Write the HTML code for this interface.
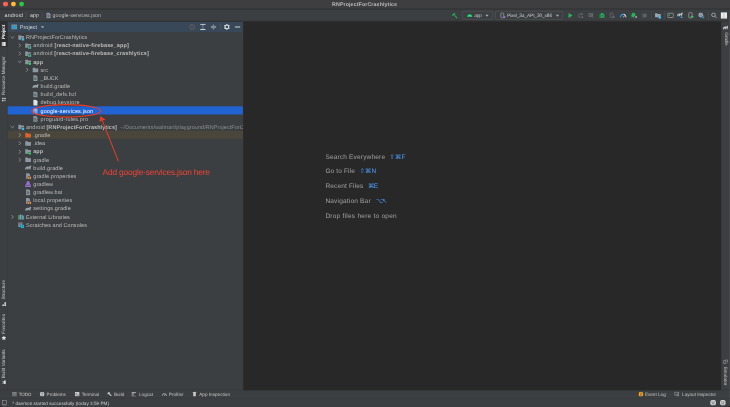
<!DOCTYPE html>
<html lang="en"><head><meta charset="utf-8"><title>RNProjectForCrashlytics</title>
<style>
html,body{margin:0;padding:0;background:#3c3f41;}
body{width:730px;height:407px;overflow:hidden;position:relative;font-family:"Liberation Sans", sans-serif;}
#stage{position:absolute;left:0;top:0;width:1792px;height:999px;transform:scale(0.407366);transform-origin:0 0;overflow:hidden;background:#3c3f41;filter:blur(0.5px);}
#stage div,#stage svg.i{position:absolute;}
#stage .t{white-space:pre;text-rendering:geometricPrecision;}
#stage .t span{position:static;}
#stage .v{transform-origin:0 0;}
</style></head><body>
<svg width="0" height="0" style="position:absolute" aria-hidden="true"><defs>
<symbol id="folder" viewBox="0 0 16 16"><path d="M1 2.5h5.6l1.4 1.8H15V13.5H1z" fill="#8c99a2"/></symbol>
<symbol id="folderEx" viewBox="0 0 16 16"><path d="M1 2.5h5.6l1.4 1.8H15V13.5H1z" fill="#d9652b"/></symbol>
<symbol id="modRoot" viewBox="0 0 16 16"><path d="M1 2.5h5.6l1.4 1.8H15V8.5H8.5V13.5H1z" fill="#8c99a2"/><rect x="9.5" y="9.5" width="6.5" height="6.5" fill="#3fb7e3"/></symbol>
<symbol id="modAndroid" viewBox="0 0 16 16"><path d="M1 2.5h5.6l1.4 1.8H15V8H7V13.5H1z" fill="#8c99a2"/><rect x="8" y="9" width="2.6" height="7" fill="#5fb865"/><rect x="10.6" y="11.5" width="2.4" height="4.5" fill="#4a9c55"/><rect x="13" y="9" width="3" height="7" fill="#3fb7e3"/></symbol>
<symbol id="modApp" viewBox="0 0 16 16"><path d="M1 2.5h5.6l1.4 1.8H15V9H9V13.5H1z" fill="#8c99a2"/><circle cx="12.3" cy="12.6" r="3" fill="#1ee36a"/></symbol>
<symbol id="file" viewBox="0 0 16 16"><path d="M3 1h6.5L13 4.5V15H3z" fill="#8c99a2"/><path d="M5 6h4M5 8.5h6M5 11h6" stroke="#3c3f41" stroke-width="1.2"/></symbol>
<symbol id="fileSel" viewBox="0 0 16 16"><path d="M3 1h6.5L13 4.5V15H3z" fill="#a9bbd6"/><path d="M5 6h4M5 8.5h6M5 11h6" stroke="#2f65ca" stroke-width="1.2"/></symbol>
<symbol id="fileWhite" viewBox="0 0 16 16"><path d="M3 1h6.5L13 4.5V15H3z" fill="#dfe3e6"/></symbol>
<symbol id="gradle" viewBox="0 0 16 16"><path d="M0.500 12.500c0-4.800 2.600-7.300 6.300-7.300 1.500 0 2.400.6 3.300.6 1.300 0 1.800-3 4-3 1.300 0 2.100 1 2.100 2.200 0 1.400-1.100 2.100-2.100 2.100.5 1.200.2 3.400-.4 5.400h-2.600v-2.400h-2.700v2.400H5.600v-2.400H3.900v2.400z" fill="#97a2aa" transform="translate(0 -0.500)"/></symbol>
<symbol id="gradleS" viewBox="0 0 16 16"><path d="M0.500 12.500c0-4.800 2.600-7.300 6.300-7.300 1.500 0 2.400.6 3.300.6 1.300 0 1.800-3 4-3 1.300 0 2.100 1 2.100 2.200 0 1.400-1.100 2.100-2.100 2.100.5 1.200.2 3.400-.4 5.400h-2.600v-2.400h-2.700v2.400H5.600v-2.400H3.900v2.400z" fill="#c6c9cb" transform="translate(0 -0.500)"/></symbol>
<symbol id="props" viewBox="0 0 16 16"><path d="M3 1h6.5L13 4.500V9H7V15H3z" fill="#8c99a2"/><rect x="8" y="11" width="2.500" height="5" fill="#e9a33a"/><rect x="10.500" y="8.500" width="2.500" height="7.500" fill="#e0533c"/><rect x="13" y="10" width="2.500" height="6" fill="#e9a33a"/></symbol>
<symbol id="shell" viewBox="0 0 16 16"><path d="M5 1h6l1 5 3 5v4H1v-4l3-5z" fill="#9b6fd0"/><path d="M2 11h12" stroke="#3c3f41" stroke-width="1.200"/></symbol>
<symbol id="libs" viewBox="0 0 16 16"><rect x="1" y="3" width="3.200" height="11" fill="#5fb865"/><rect x="5" y="1.500" width="3.200" height="12.500" fill="#8c99a2"/><rect x="9" y="3" width="3.200" height="11" fill="#3fb7e3"/><rect x="13" y="4.500" width="2.500" height="9.500" fill="#8c99a2"/></symbol>
<symbol id="scratch" viewBox="0 0 16 16"><path d="M1 1h10v6H6v5H1z" fill="#8c99a2"/><path d="M3 3.500h6M3 6h3" stroke="#3c3f41" stroke-width="1.200"/><circle cx="11" cy="11" r="4.600" fill="#20b6ef"/><path d="M11 8.500V11.300h2" stroke="#2b2b2b" stroke-width="1.200" fill="none"/></symbol>
<symbol id="chevR" viewBox="0 0 16 16"><path d="M5.500 2.500l5 5.500-5 5.500" stroke="#afb1b3" stroke-width="2" fill="none"/></symbol>
<symbol id="chevD" viewBox="0 0 16 16"><path d="M2.500 5.500l5.500 5 5.500-5" stroke="#afb1b3" stroke-width="2" fill="none"/></symbol>
<symbol id="ddArrow" viewBox="0 0 16 16"><path d="M3.500 5.500h9L8 11z" fill="#a8abad"/></symbol>
<symbol id="projIcon" viewBox="0 0 16 16"><rect x="1" y="2" width="14" height="12" fill="#7f8b94"/><rect x="2.800" y="5.200" width="10.400" height="7" fill="#229fd6"/></symbol>
<symbol id="locate" viewBox="0 0 16 16"><circle cx="8" cy="8" r="6.500" stroke="#716c69" stroke-width="1.400" fill="none"/><path d="M5.300 3.200l5.400 9.600M10.700 3.200l-5.400 9.600" stroke="#6a6663" stroke-width="1.100"/></symbol>
<symbol id="expandAll" viewBox="0 0 16 16"><path d="M1.500 1.600h13M1.500 14.600h13" stroke="#e3e5e7" stroke-width="2.300"/><path d="M8 4v8M5.800 6L8 3.800 10.200 6M5.800 10L8 12.200 10.200 10" stroke="#9aa3ab" stroke-width="1.300" fill="none"/></symbol>
<symbol id="collapseAll" viewBox="0 0 16 16"><path d="M1.500 8.300h13" stroke="#ccd0d3" stroke-width="2.300"/><path d="M8 1.500v4M8 15v-4M5.800 3.500L8 5.700l2.200-2.200M5.800 13L8 10.800l2.200 2.200" stroke="#a3abb2" stroke-width="1.400" fill="none"/></symbol>
<symbol id="gear" viewBox="0 0 16 16"><circle cx="8" cy="8" r="4.600" stroke="#d9dcde" stroke-width="3" fill="none"/><path d="M8 .600v14.800M1.600 4.300l12.800 7.400M1.600 11.700l12.800-7.400" stroke="#d9dcde" stroke-width="2.400"/><circle cx="8" cy="8" r="2.900" fill="#3b4754"/></symbol>
<symbol id="minus" viewBox="0 0 16 16"><path d="M1.500 8.300h13" stroke="#ced2d5" stroke-width="2.600"/></symbol>
<symbol id="hammer" viewBox="0 0 16 16"><path d="M6.800 6.200L14.200 14.300" stroke="#22b559" stroke-width="2.500" fill="none"/><path d="M2 7.800L9.200 2.800" stroke="#22b559" stroke-width="3" fill="none"/></symbol>
<symbol id="android" viewBox="0 0 16 16"><path d="M1.700 11.300c.4-4.300 3.100-6.400 6.300-6.400s5.900 2.100 6.300 6.400z" fill="#27e07c"/></symbol>
<symbol id="device" viewBox="0 0 16 16"><rect x="3.500" y="1.800" width="7" height="12" rx="1" stroke="#aeb3b7" stroke-width="1.500" fill="none"/><circle cx="12" cy="12.300" r="2.800" fill="#9b6fd0"/></symbol>
<symbol id="play" viewBox="0 0 16 16"><path d="M3.500 2l10 6-10 6z" fill="#27b45a"/></symbol>
<symbol id="rerun" viewBox="0 0 16 16"><path d="M11.500 4.500H6.500a3.500 3.500 0 0 0-3.500 3.500v1a3.500 3.500 0 0 0 3.500 3.500H8.500" stroke="#6d7072" stroke-width="1.900" fill="none"/><path d="M10.500 1l4 3.500-4 3.500z" fill="#6d7072"/><rect x="10.500" y="10" width="4" height="4" fill="#6d7072"/></symbol>
<symbol id="greyList" viewBox="0 0 16 16"><rect x="1.500" y="2" width="11.500" height="9.500" fill="#63666a"/><path d="M3 5h8M3 8h5" stroke="#4a4d4f" stroke-width="1.300"/><path d="M10.500 10.500l4.500 4.500" stroke="#63666a" stroke-width="1.800"/></symbol>
<symbol id="bug" viewBox="0 0 16 16"><ellipse cx="8" cy="9" rx="4.400" ry="5.400" fill="#22b559"/><path d="M5 3.200h6v2.300H5zM1 6.500l3 1.500M15 6.500l-3 1.500M1 9.800h3M15 9.800h-3M1.500 13.500l3-1.500M14.500 13.500l-3-1.500" stroke="#22b559" stroke-width="1.600" fill="#22b559"/><rect x="6" y="6.800" width="4" height="4.400" fill="#2a7d42"/></symbol>
<symbol id="greyDev" viewBox="0 0 16 16"><rect x="2.800" y="1.800" width="7" height="11" rx="1" stroke="#6d7072" stroke-width="1.700" fill="none"/><path d="M9.500 8.500l5.500 3.200-5.500 3.300z" fill="#6d7072"/></symbol>
<symbol id="profiler" viewBox="0 0 16 16"><path d="M1.500 12.500A6.500 6.500 0 0 1 8.500 5.200" stroke="#2a9fe0" stroke-width="2.800" fill="none"/><path d="M8.500 5.200a6.500 6.500 0 0 1 6 7.300" stroke="#d8dadc" stroke-width="2.600" fill="none"/><path d="M8 13L11 8.300" stroke="#d8dadc" stroke-width="1.900"/></symbol>
<symbol id="bugArrow" viewBox="0 0 16 16"><ellipse cx="7" cy="8" rx="4.200" ry="5" fill="#27b45a"/><path d="M4 2.500h6v2H4zM0 5.500l3 1.500M14 5.500l-3 1.500M0 8.500h3M0.500 12.500l3-1.500" stroke="#27b45a" stroke-width="1.500" fill="#27b45a"/><path d="M9 10h6.500v6H9z" fill="#3c3f41"/><path d="M10.500 15l4.500-4.500M11.500 10.500H15V14" stroke="#d0d3d5" stroke-width="1.500" fill="none"/></symbol>
<symbol id="stop" viewBox="0 0 16 16"><rect x="3" y="3.300" width="10.500" height="9.500" fill="#5c5f61"/></symbol>
<symbol id="tbFolder" viewBox="0 0 16 16"><path d="M1 2.500h5l1.400 1.800H15V12.500H1z" fill="#9ba5ac"/><rect x="9" y="8.500" width="7" height="7.500" fill="#2f9de0"/><path d="M12.500 10v4.500M10.800 12.800l1.700 1.800 1.700-1.800" stroke="#e8f2fa" stroke-width="1" fill="none"/></symbol>
<symbol id="tbAvd" viewBox="0 0 16 16"><rect x="1" y="2.500" width="14" height="10.500" rx="1" stroke="#b5babd" stroke-width="1.500" fill="none"/><rect x="3.500" y="6" width="2.500" height="3" fill="#2fd06b"/></symbol>
<symbol id="tbSync" viewBox="0 0 16 16"><path d="M0.500 12.500c0-4.800 2.600-7.300 6.300-7.300 1.500 0 2.400.6 3.300.6 1.300 0 1.800-3 4-3 1.300 0 2.100 1 2.100 2.200 0 1.400-1.100 2.100-2.100 2.100.5 1.200.2 3.400-.4 5.400h-2.600v-2.400h-2.700v2.400H5.600v-2.400H3.900v2.400z" fill="#b9bec1" transform="translate(-0.500 -1.800) scale(0.92)"/><path d="M11 7.500v6.500M8 11.200l3 3.300 3-3.300" stroke="#2f9de0" stroke-width="2.100" fill="none"/></symbol>
<symbol id="tbDev" viewBox="0 0 16 16"><rect x="3" y="1" width="8" height="13" rx="1" stroke="#b5babd" stroke-width="1.500" fill="none"/><path d="M7 12.500c.3-2.500 1.800-3.500 4-3.500s3.700 1 4 3.500z" fill="#2fd06b"/></symbol>
<symbol id="tbSdk" viewBox="0 0 16 16"><path d="M1.500 4l4.500-2.500L10.500 4v5.500L6 12 1.500 9.500z" stroke="#bcc0c3" stroke-width="1.700" fill="#7c8184"/><path d="M6 6v6M1.500 4L6 6.300 10.500 4" stroke="#bcc0c3" stroke-width="1.100" fill="none"/><path d="M12 7v7.500M9 11.500l3 3.300 3-3.300" stroke="#2f9de0" stroke-width="2.100" fill="none"/></symbol>
<symbol id="search" viewBox="0 0 16 16"><circle cx="6.500" cy="6.500" r="4.500" stroke="#c4c7c9" stroke-width="1.700" fill="none"/><path d="M10 10l4.500 4.500" stroke="#c4c7c9" stroke-width="1.900"/></symbol>
<symbol id="avatar" viewBox="0 0 16 16"><rect width="16" height="16" fill="#ececed"/><circle cx="8" cy="6" r="2.600" fill="#cfd1d3"/><path d="M3.500 13.500c.500-3 2.300-3.800 4.500-3.800s4 .8 4.500 3.800z" fill="#cfd1d3"/></symbol>
<symbol id="sProject" viewBox="0 0 16 16"><path d="M1.500 1.500h13v13h-13z" fill="#e4e5e6"/><path d="M1.500 5.500h13" stroke="#2d2f30" stroke-width="1.400"/></symbol>
<symbol id="sRes" viewBox="0 0 16 16"><path d="M1.500 1.500h5.500v5.500H1.500zM9 1.500h5.500v5.500H9zM1.500 9h5.500v5.500H1.500z" fill="#cfd1d2"/><path d="M9 11.800h5.500M11.800 9v5.500" stroke="#cfd1d2" stroke-width="1.800"/></symbol>
<symbol id="sStruct" viewBox="0 0 16 16"><path d="M1 9h6v6.500H1zM8.500 1h6.500v14.500H8.500z" fill="#d6d8d9"/><path d="M8.500 8h6.500" stroke="#3c3f41" stroke-width="1"/></symbol>
<symbol id="star" viewBox="0 0 16 16"><path d="M8 .500l2.300 4.900 5.300.6-3.900 3.600 1 5.300L8 12.300 3.300 14.900l1-5.300L.4 6l5.300-.6z" fill="#dcdddf"/></symbol>
<symbol id="sVariants" viewBox="0 0 16 16"><path d="M.500 14.500c.500-6.500 3.700-8.500 7.500-8.500s7 2 7.500 8.500z" fill="#e2e3e4"/><path d="M3 1.500l2.500 4.500M13 1.500l-2.500 4.500" stroke="#e2e3e4" stroke-width="1.600"/></symbol>
<symbol id="bTodo" viewBox="0 0 16 16"><path d="M1 3h14M1 6.500h14M1 10h14M1 13.500h14" stroke="#a2a5a7" stroke-width="2"/></symbol>
<symbol id="bProblems" viewBox="0 0 16 16"><circle cx="8" cy="8" r="7" fill="#c4c7c9"/><path d="M8 3.500v5.500M8 10.500v2" stroke="#3c3f41" stroke-width="2"/></symbol>
<symbol id="bTerminal" viewBox="0 0 16 16"><rect x="1" y="1.500" width="14" height="13" fill="#c6c8c9"/><path d="M3.500 5l3 3-3 3M8 11.500h4" stroke="#3c3f41" stroke-width="1.600" fill="none"/></symbol>
<symbol id="bBuild" viewBox="0 0 16 16"><path d="M2 5.500L6.500 1l3 2-1.500 1.500 7 8-2 2-8-7L3.500 9z" fill="#c6c8c9"/></symbol>
<symbol id="bLogcat" viewBox="0 0 16 16"><path d="M1 3h14M1 7h9M1 11h6" stroke="#c6c8c9" stroke-width="2.200"/><path d="M1 14.500h14" stroke="#c6c8c9" stroke-width="1.500"/></symbol>
<symbol id="bProfiler" viewBox="0 0 16 16"><path d="M1.500 13A6.500 6.500 0 0 1 14.500 13" stroke="#c6c8c9" stroke-width="2.200" fill="none"/><path d="M7.500 13.500L11 8" stroke="#c6c8c9" stroke-width="1.800"/></symbol>
<symbol id="bAppInsp" viewBox="0 0 16 16"><rect x="4" y="1" width="8" height="14" rx="1.500" fill="#c6c8c9"/></symbol>
<symbol id="bEvent" viewBox="0 0 16 16"><path d="M8 .5a7.500 7.500 0 1 1-5 13.100L.5 15.500V8A7.500 7.500 0 0 1 8 .5z" fill="#f2a51d"/><path d="M5.500 5.500c1.500-1.800 5-1.300 4.800.9-.2 1.600-2.800 2.400-4.800 4.600h5" stroke="#3c3f41" stroke-width="1.500" fill="none"/></symbol>
<symbol id="bLayout" viewBox="0 0 16 16"><path d="M13.500 8V2H1.500v9H7" stroke="#c6c8c9" stroke-width="1.600" fill="none"/><circle cx="10.500" cy="10.500" r="2.800" stroke="#c6c8c9" stroke-width="1.500" fill="none"/><path d="M12.500 12.500l3 3" stroke="#c6c8c9" stroke-width="1.600"/></symbol>
<symbol id="face" viewBox="0 0 16 16"><circle cx="8" cy="8" r="7.700" fill="#cbcdcf"/><circle cx="5.400" cy="6.300" r="1.400" fill="#3c3f41"/><circle cx="10.600" cy="6.300" r="1.400" fill="#3c3f41"/><path d="M4.800 12c1.300-2.100 5.100-2.100 6.400 0" stroke="#3c3f41" stroke-width="1.400" fill="none"/></symbol>
<symbol id="statusBox" viewBox="0 0 16 16"><rect x="2" y="1.500" width="12" height="11" stroke="#9da0a2" stroke-width="1.500" fill="none"/><path d="M2 14.800h12" stroke="#9da0a2" stroke-width="1.500"/></symbol>
<symbol id="emu" viewBox="0 0 16 16"><rect x="1.500" y="4" width="8" height="10.500" rx="1" stroke="#c6c8c9" stroke-width="1.600" fill="none"/><path d="M7 1.500h7.500v9" stroke="#c6c8c9" stroke-width="1.500" fill="none"/></symbol>
<symbol id="jsonSel" viewBox="0 0 16 16"><path d="M3 1h6.500L13 4.500V15H3z" fill="#9fb2cf"/><path d="M5 9.500h2v3H5zM9 9.500h2v3H9z" fill="#2f65ca"/></symbol>
</defs></svg>

<div id="stage">
<div style="left:0.0px;top:0.0px;width:1792.0px;height:22.09px;background:#3e3e40;"></div>
<div style="left:0.0px;top:21.36px;width:1792.0px;height:2.21px;background:#313335;"></div>
<div style="left:0.0px;top:23.57px;width:1792.0px;height:28.23px;background:#3c3f41;"></div>
<div style="left:0.0px;top:51.31px;width:1792.0px;height:1.72px;background:#2d2f30;"></div>
<div style="left:596.52px;top:52.78px;width:1174.86px;height:905.33px;background:#282828;"></div>
<div style="left:0.0px;top:51.55px;width:19.15px;height:905.82px;background:#3c3f41;"></div>
<div style="left:18.9px;top:115.38px;width:0.98px;height:841.99px;background:#37393b;"></div>
<div style="left:1771.38px;top:52.78px;width:20.62px;height:905.33px;background:#3c3f41;"></div>
<div style="left:1789.79px;top:23.57px;width:2.21px;height:975.54px;background:#484b4d;"></div>
<div style="left:0.0px;top:956.88px;width:1792.0px;height:1.1px;background:#323232;"></div>
<div style="left:0.0px;top:977.5px;width:1792.0px;height:1.1px;background:#353739;"></div>
<div style="left:6.96px;top:3.5200000000000005px;width:12.6px;height:12.6px;border-radius:50%;background:#fe5f57"></div>
<div style="left:26.84px;top:3.5200000000000005px;width:12.6px;height:12.6px;border-radius:50%;background:#febc2e"></div>
<div style="left:46.720000000000006px;top:3.5200000000000005px;width:12.6px;height:12.6px;border-radius:50%;background:#28c840"></div>
<div class="t" style="left:815.12px;top:3px;font-size:13px;line-height:15px;color:#b9b9ba;letter-spacing:0.257px;"><span style="font-weight:bold;">RNProjectForCrashlytics</span></div>
<div class="t" style="left:11.29px;top:30px;font-size:13px;line-height:15px;color:#dedede;letter-spacing:0.256px;">android</div>
<div class="t" style="left:73.4px;top:30px;font-size:13px;line-height:15px;color:#dedede;letter-spacing:0.292px;">app</div>
<div class="t" style="left:129.12px;top:30px;font-size:13px;line-height:15px;color:#bbbbbb;letter-spacing:0.015px;">google-services.json</div>
<svg class="i" style="left:59.56px;top:27.310000000000002px" width="10" height="20" viewBox="0 0 10 20"><path d="M2 1.500l5 8.500-5 8.500" stroke="#5a5d5f" stroke-width="1.200" fill="none"/></svg>
<svg class="i" style="left:99.08px;top:27.310000000000002px" width="10" height="20" viewBox="0 0 10 20"><path d="M2 1.500l5 8.500-5 8.500" stroke="#5a5d5f" stroke-width="1.200" fill="none"/></svg>
<svg class="i" style="left:110.81px;top:29.56px;" width="16" height="16" viewBox="0 0 16 16"><use href="#file"/></svg>
<svg class="i" style="left:1108.44px;top:29.56px;" width="16" height="16" viewBox="0 0 16 16"><use href="#hammer"/></svg>
<div style="left:1135.34px;top:27.49px;width:72.63px;height:18.87px;border:1px solid #5e6163;border-radius:2px"></div>
<svg class="i" style="left:1144.53px;top:30.29px;" width="16" height="16" viewBox="0 0 16 16"><use href="#android"/></svg>
<div class="t" style="left:1164.31px;top:31px;font-size:12px;line-height:14px;color:#c6c6c6;letter-spacing:-0.54px;">app</div>
<svg class="i" style="left:1187.98px;top:31.04px;" width="15" height="15" viewBox="0 0 16 16"><use href="#ddArrow"/></svg>
<div style="left:1216.11px;top:27.49px;width:164.19px;height:18.87px;border:1px solid #5e6163;border-radius:2px"></div>
<svg class="i" style="left:1225.53px;top:30.05px;" width="16" height="16" viewBox="0 0 16 16"><use href="#device"/></svg>
<div class="t" style="left:1244.34px;top:31px;font-size:12px;line-height:14px;color:#c6c6c6;letter-spacing:-0.389px;">Pixel_3a_API_30_x86</div>
<svg class="i" style="left:1361.05px;top:31.04px;" width="15" height="15" viewBox="0 0 16 16"><use href="#ddArrow"/></svg>
<svg class="i" style="left:1391.72px;top:30.05px;" width="16" height="16" viewBox="0 0 16 16"><use href="#play"/></svg>
<svg class="i" style="left:1417.25px;top:30.05px;" width="16" height="16" viewBox="0 0 16 16"><use href="#rerun"/></svg>
<svg class="i" style="left:1443.27px;top:30.05px;" width="16" height="16" viewBox="0 0 16 16"><use href="#greyList"/></svg>
<svg class="i" style="left:1469.54px;top:30.05px;" width="16" height="16" viewBox="0 0 16 16"><use href="#bug"/></svg>
<svg class="i" style="left:1495.32px;top:30.05px;" width="16" height="16" viewBox="0 0 16 16"><use href="#greyDev"/></svg>
<svg class="i" style="left:1521.58px;top:30.05px;" width="16" height="16" viewBox="0 0 16 16"><use href="#profiler"/></svg>
<svg class="i" style="left:1547.6px;top:30.05px;" width="16" height="16" viewBox="0 0 16 16"><use href="#bugArrow"/></svg>
<svg class="i" style="left:1573.62px;top:30.05px;" width="16" height="16" viewBox="0 0 16 16"><use href="#stop"/></svg>
<svg class="i" style="left:1607.01px;top:30.05px;" width="16" height="16" viewBox="0 0 16 16"><use href="#tbFolder"/></svg>
<svg class="i" style="left:1637.94px;top:30.05px;" width="16" height="16" viewBox="0 0 16 16"><use href="#tbAvd"/></svg>
<svg class="i" style="left:1662.24px;top:30.05px;" width="16" height="16" viewBox="0 0 16 16"><use href="#tbSync"/></svg>
<svg class="i" style="left:1688.02px;top:30.05px;" width="16" height="16" viewBox="0 0 16 16"><use href="#tbDev"/></svg>
<svg class="i" style="left:1713.55px;top:30.05px;" width="16" height="16" viewBox="0 0 16 16"><use href="#tbSdk"/></svg>
<svg class="i" style="left:1744.72px;top:30.05px;" width="16" height="16" viewBox="0 0 16 16"><use href="#search"/></svg>
<div style="left:1599.3px;top:28.23px;width:0.98px;height:19.64px;background:#55585a;"></div>
<div style="left:1631.21px;top:28.23px;width:0.98px;height:19.64px;background:#55585a;"></div>
<div style="left:1737.5px;top:28.23px;width:0.98px;height:19.64px;background:#55585a;"></div>
<svg class="i" style="left:1769.27px;top:29.93px;" width="16" height="16" viewBox="0 0 16 16"><use href="#avatar"/></svg>
<div style="left:0.0px;top:52.29px;width:19.15px;height:63.09px;background:#2d2f30;"></div>
<div class="t" style="left:0.0px;top:-6.84px;font-size:11.4px;line-height:13.68px;color:#f0f0f0;letter-spacing:-0.574px;left:0;top:0;transform:translate(3.96px,95.98px) rotate(-90deg);transform-origin:0 0;"><span style="font-weight:bold;">Project</span></div>
<svg class="i" style="left:3.45px;top:102.01px;transform:rotate(-90deg)" width="12" height="12" viewBox="0 0 16 16"><use href="#sProject"/></svg>
<div class="t" style="left:0.0px;top:-6.84px;font-size:11.4px;line-height:13.68px;color:#c6c8c9;letter-spacing:-0.102px;left:0;top:0;transform:translate(3.96px,233.45px) rotate(-90deg);transform-origin:0 0;">Resource Manager</div>
<svg class="i" style="left:3.95px;top:239.0px;" width="11" height="11" viewBox="0 0 16 16"><use href="#sRes"/></svg>
<div class="t" style="left:0.0px;top:-6.84px;font-size:11.4px;line-height:13.68px;color:#c6c8c9;letter-spacing:0.238px;left:0;top:0;transform:translate(3.96px,735.46px) rotate(-90deg);transform-origin:0 0;">Structure</div>
<svg class="i" style="left:4.56px;top:740.76px;" width="11" height="11" viewBox="0 0 16 16"><use href="#sStruct"/></svg>
<div class="t" style="left:0.0px;top:-6.84px;font-size:11.4px;line-height:13.68px;color:#c6c8c9;letter-spacing:0.223px;left:0;top:0;transform:translate(3.96px,819.16px) rotate(-90deg);transform-origin:0 0;">Favorites</div>
<svg class="i" style="left:2.58px;top:823.22px;" width="13" height="13" viewBox="0 0 16 16"><use href="#star"/></svg>
<div class="t" style="left:0.0px;top:-6.84px;font-size:11.4px;line-height:13.68px;color:#c6c8c9;letter-spacing:0.107px;left:0;top:0;transform:translate(3.96px,928.40px) rotate(-90deg);transform-origin:0 0;">Build Variants</div>
<svg class="i" style="left:3.95px;top:932.97px;transform:rotate(-90deg)" width="11" height="11" viewBox="0 0 16 16"><use href="#sVariants"/></svg>
<svg class="i" style="left:1774.2px;top:61.24px;" width="14" height="14" viewBox="0 0 16 16"><use href="#gradleS"/></svg>
<div class="t" style="left:0.0px;top:-6.84px;font-size:11.4px;line-height:13.68px;color:#c6c8c9;letter-spacing:-0.259px;left:0;top:0;transform:translate(1787.79px,79.04px) rotate(90deg);transform-origin:0 0;">Gradle</div>
<svg class="i" style="left:1774.71px;top:882.39px;" width="12" height="12" viewBox="0 0 16 16"><use href="#emu"/></svg>
<div class="t" style="left:0.0px;top:-6.84px;font-size:11.4px;line-height:13.68px;color:#c6c8c9;letter-spacing:0.192px;left:0;top:0;transform:translate(1786.32px,899.44px) rotate(90deg);transform-origin:0 0;">Emulator</div>
<div style="left:19.39px;top:53.51px;width:577.12px;height:25.53px;background:#394858;"></div>
<svg class="i" style="left:26.86px;top:57.79px;" width="16" height="16" viewBox="0 0 16 16"><use href="#projIcon"/></svg>
<div class="t" style="left:48.6px;top:59px;font-size:13.4px;line-height:15px;color:#d4d7da;letter-spacing:0.146px;">Project</div>
<svg class="i" style="left:97.32px;top:58.78px;" width="15" height="15" viewBox="0 0 16 16"><use href="#ddArrow"/></svg>
<svg class="i" style="left:464.06px;top:57.79px;" width="16" height="16" viewBox="0 0 16 16"><use href="#locate"/></svg>
<svg class="i" style="left:490.08px;top:57.79px;" width="16" height="16" viewBox="0 0 16 16"><use href="#expandAll"/></svg>
<svg class="i" style="left:516.1px;top:57.79px;" width="16" height="16" viewBox="0 0 16 16"><use href="#collapseAll"/></svg>
<div style="left:540.79px;top:56.46px;width:0.98px;height:18.66px;background:#53606e;"></div>
<svg class="i" style="left:548.99px;top:57.79px;" width="16" height="16" viewBox="0 0 16 16"><use href="#gear"/></svg>
<svg class="i" style="left:575.26px;top:57.79px;" width="16" height="16" viewBox="0 0 16 16"><use href="#minus"/></svg>
<div style="left:19.39px;top:261.28px;width:577.12px;height:20.04px;background:#2064d4;"></div>
<div style="left:19.39px;top:321.41px;width:577.12px;height:20.04px;background:#4b463c;"></div>
<svg class="i" style="left:24.18px;top:84.9px;" width="13" height="13" viewBox="0 0 16 16"><use href="#chevD"/></svg>
<svg class="i" style="left:43.55px;top:83.64px;" width="16" height="16" viewBox="0 0 16 16"><use href="#modRoot"/></svg>
<div class="t" style="left:63.82px;top:84px;font-size:13.4px;line-height:15px;color:#bbbbbb;letter-spacing:0.17px;">RNProjectForCrashlytics</div>
<svg class="i" style="left:41.98px;top:104.94px;" width="13" height="13" viewBox="0 0 16 16"><use href="#chevR"/></svg>
<svg class="i" style="left:61.35px;top:103.69px;" width="16" height="16" viewBox="0 0 16 16"><use href="#modAndroid"/></svg>
<div class="t" style="left:81.62px;top:103px;font-size:13.4px;line-height:15px;color:#bbbbbb;letter-spacing:0.445px;">android <span style="font-weight:bold;">[react-native-firebase_app]</span></div>
<svg class="i" style="left:41.98px;top:124.98px;" width="13" height="13" viewBox="0 0 16 16"><use href="#chevR"/></svg>
<svg class="i" style="left:61.35px;top:123.73px;" width="16" height="16" viewBox="0 0 16 16"><use href="#modAndroid"/></svg>
<div class="t" style="left:81.62px;top:123px;font-size:13.4px;line-height:15px;color:#bbbbbb;letter-spacing:0.431px;">android <span style="font-weight:bold;">[react-native-firebase_crashlytics]</span></div>
<svg class="i" style="left:41.98px;top:145.03px;" width="13" height="13" viewBox="0 0 16 16"><use href="#chevD"/></svg>
<svg class="i" style="left:61.35px;top:143.77px;" width="16" height="16" viewBox="0 0 16 16"><use href="#modApp"/></svg>
<div class="t" style="left:81.62px;top:145px;font-size:13.4px;line-height:15px;color:#bbbbbb;letter-spacing:0.163px;"><span style="font-weight:bold;">app</span></div>
<svg class="i" style="left:59.78px;top:165.07px;" width="13" height="13" viewBox="0 0 16 16"><use href="#chevR"/></svg>
<svg class="i" style="left:79.15px;top:163.82px;" width="16" height="16" viewBox="0 0 16 16"><use href="#folder"/></svg>
<div class="t" style="left:99.42px;top:165px;font-size:13.4px;line-height:15px;color:#bbbbbb;letter-spacing:0.267px;">src</div>
<svg class="i" style="left:79.15px;top:183.86px;" width="16" height="16" viewBox="0 0 16 16"><use href="#file"/></svg>
<div class="t" style="left:99.42px;top:184px;font-size:13.4px;line-height:15px;color:#bbbbbb;letter-spacing:-0.191px;">_BUCK</div>
<svg class="i" style="left:79.15px;top:203.9px;" width="16" height="16" viewBox="0 0 16 16"><use href="#gradle"/></svg>
<div class="t" style="left:99.42px;top:204px;font-size:13.4px;line-height:15px;color:#bbbbbb;letter-spacing:0.305px;">build.gradle</div>
<svg class="i" style="left:79.15px;top:223.95px;" width="16" height="16" viewBox="0 0 16 16"><use href="#file"/></svg>
<div class="t" style="left:99.42px;top:224px;font-size:13.4px;line-height:15px;color:#bbbbbb;letter-spacing:0.428px;">build_defs.bzl</div>
<svg class="i" style="left:79.15px;top:243.99px;" width="16" height="16" viewBox="0 0 16 16"><use href="#fileWhite"/></svg>
<div class="t" style="left:99.42px;top:243px;font-size:13.4px;line-height:15px;color:#bbbbbb;letter-spacing:0.314px;">debug.keystore</div>
<svg class="i" style="left:79.15px;top:264.03px;" width="16" height="16" viewBox="0 0 16 16"><use href="#jsonSel"/></svg>
<div class="t" style="left:99.42px;top:265px;font-size:13.4px;line-height:15px;color:#bbbbbb;letter-spacing:0.377px;"><span style="color:#ffffff;">google-services.json</span></div>
<svg class="i" style="left:79.15px;top:284.08px;" width="16" height="16" viewBox="0 0 16 16"><use href="#file"/></svg>
<div class="t" style="left:99.42px;top:285px;font-size:13.4px;line-height:15px;color:#bbbbbb;letter-spacing:0.371px;">proguard-rules.pro</div>
<svg class="i" style="left:24.18px;top:305.38px;" width="13" height="13" viewBox="0 0 16 16"><use href="#chevD"/></svg>
<svg class="i" style="left:43.55px;top:304.12px;" width="16" height="16" viewBox="0 0 16 16"><use href="#modRoot"/></svg>
<div class="t" style="left:63.82px;top:305px;font-size:13.4px;line-height:15px;color:#bbbbbb;letter-spacing:0.229px;">android <span style="font-weight:bold;">[RNProjectForCrashlytics]</span></div>
<svg class="i" style="left:41.98px;top:325.42px;" width="13" height="13" viewBox="0 0 16 16"><use href="#chevR"/></svg>
<svg class="i" style="left:61.35px;top:324.16px;" width="16" height="16" viewBox="0 0 16 16"><use href="#folderEx"/></svg>
<div class="t" style="left:81.62px;top:324px;font-size:13.4px;line-height:15px;color:#bbbbbb;letter-spacing:0.111px;">.gradle</div>
<svg class="i" style="left:41.98px;top:345.46px;" width="13" height="13" viewBox="0 0 16 16"><use href="#chevR"/></svg>
<svg class="i" style="left:61.35px;top:344.21px;" width="16" height="16" viewBox="0 0 16 16"><use href="#folder"/></svg>
<div class="t" style="left:81.62px;top:344px;font-size:13.4px;line-height:15px;color:#bbbbbb;letter-spacing:-0.015px;">.idea</div>
<svg class="i" style="left:41.98px;top:365.51px;" width="13" height="13" viewBox="0 0 16 16"><use href="#chevR"/></svg>
<svg class="i" style="left:61.35px;top:364.25px;" width="16" height="16" viewBox="0 0 16 16"><use href="#modApp"/></svg>
<div class="t" style="left:81.62px;top:364px;font-size:13.4px;line-height:15px;color:#bbbbbb;letter-spacing:0.163px;"><span style="font-weight:bold;">app</span></div>
<svg class="i" style="left:41.98px;top:385.55px;" width="13" height="13" viewBox="0 0 16 16"><use href="#chevR"/></svg>
<svg class="i" style="left:61.35px;top:384.29px;" width="16" height="16" viewBox="0 0 16 16"><use href="#folder"/></svg>
<div class="t" style="left:81.62px;top:386px;font-size:13.4px;line-height:15px;color:#bbbbbb;letter-spacing:0.259px;">gradle</div>
<svg class="i" style="left:61.35px;top:404.34px;" width="16" height="16" viewBox="0 0 16 16"><use href="#gradle"/></svg>
<div class="t" style="left:81.62px;top:405px;font-size:13.4px;line-height:15px;color:#bbbbbb;letter-spacing:0.325px;">build.gradle</div>
<svg class="i" style="left:61.35px;top:424.38px;" width="16" height="16" viewBox="0 0 16 16"><use href="#props"/></svg>
<div class="t" style="left:81.62px;top:425px;font-size:13.4px;line-height:15px;color:#bbbbbb;letter-spacing:0.326px;">gradle.properties</div>
<svg class="i" style="left:61.35px;top:444.42px;" width="16" height="16" viewBox="0 0 16 16"><use href="#shell"/></svg>
<div class="t" style="left:81.62px;top:445px;font-size:13.4px;line-height:15px;color:#bbbbbb;letter-spacing:0.278px;">gradlew</div>
<svg class="i" style="left:61.35px;top:464.47px;" width="16" height="16" viewBox="0 0 16 16"><use href="#file"/></svg>
<div class="t" style="left:81.62px;top:464px;font-size:13.4px;line-height:15px;color:#bbbbbb;letter-spacing:0.289px;">gradlew.bat</div>
<svg class="i" style="left:61.35px;top:484.51px;" width="16" height="16" viewBox="0 0 16 16"><use href="#props"/></svg>
<div class="t" style="left:81.62px;top:484px;font-size:13.4px;line-height:15px;color:#bbbbbb;letter-spacing:0.323px;">local.properties</div>
<svg class="i" style="left:61.35px;top:504.55px;" width="16" height="16" viewBox="0 0 16 16"><use href="#gradle"/></svg>
<div class="t" style="left:81.62px;top:504px;font-size:13.4px;line-height:15px;color:#bbbbbb;letter-spacing:0.347px;">settings.gradle</div>
<svg class="i" style="left:24.18px;top:525.85px;" width="13" height="13" viewBox="0 0 16 16"><use href="#chevR"/></svg>
<svg class="i" style="left:43.55px;top:524.6px;" width="16" height="16" viewBox="0 0 16 16"><use href="#libs"/></svg>
<div class="t" style="left:63.82px;top:526px;font-size:13.4px;line-height:15px;color:#bbbbbb;letter-spacing:0.198px;">External Libraries</div>
<svg class="i" style="left:43.55px;top:544.64px;" width="16" height="16" viewBox="0 0 16 16"><use href="#scratch"/></svg>
<div class="t" style="left:63.82px;top:545px;font-size:13.4px;line-height:15px;color:#bbbbbb;letter-spacing:0.208px;">Scratches and Consoles</div>
<div class="t" style="left:295.31px;top:305px;font-size:13.4px;line-height:15px;color:#8c8e90;letter-spacing:0.2px;width:301.2px;overflow:hidden;">~/Documents/walmart/playground/RNProjectForCrashlytics/android</div>
<svg class="i" style="left:0;top:0" width="1792" height="999" viewBox="0 0 730 407"><ellipse cx="66.2" cy="110.9" rx="34.4" ry="6.2" fill="none" stroke="#ee3a24" stroke-width="1.15"/><path d="M118.4 161.4L102.2 120.4" stroke="#ee3a24" stroke-width="1.0" fill="none"/><path d="M100.3 115.9L105.3 119.5L99.5 121.8Z" fill="#ee3a24"/></svg>
<div class="t" style="left:251.86px;top:412px;font-size:20.6px;line-height:23px;color:#ec4336;letter-spacing:-0.479px;">Add google-services.json here</div>
<div class="t" style="left:798.79px;top:377px;font-size:16px;line-height:17px;color:#a1a1a1;letter-spacing:0.422px;">Search Everywhere</div>
<div class="t" style="left:956.39px;top:377px;font-size:16px;line-height:17px;color:#4a9cf5;letter-spacing:0.25px;"><span style="font-family:'DejaVu Sans',sans-serif;font-size:15.5px;">⇧⌘</span>F</div>
<div class="t" style="left:798.79px;top:412px;font-size:16px;line-height:17px;color:#a1a1a1;letter-spacing:0.306px;">Go to File</div>
<div class="t" style="left:882.99px;top:412px;font-size:16px;line-height:17px;color:#4a9cf5;letter-spacing:0.229px;"><span style="font-family:'DejaVu Sans',sans-serif;font-size:15.5px;">⇧⌘</span>N</div>
<div class="t" style="left:798.79px;top:448px;font-size:16px;line-height:17px;color:#a1a1a1;letter-spacing:0.384px;">Recent Files</div>
<div class="t" style="left:903.12px;top:448px;font-size:16px;line-height:17px;color:#4a9cf5;letter-spacing:-1.426px;"><span style="font-family:'DejaVu Sans',sans-serif;font-size:15.5px;">⌘</span>E</div>
<div class="t" style="left:798.79px;top:485px;font-size:16px;line-height:17px;color:#a1a1a1;letter-spacing:0.464px;">Navigation Bar</div>
<div class="t" style="left:922.76px;top:485px;font-size:16px;line-height:17px;color:#4a9cf5;letter-spacing:-2.665px;"><span style="font-family:'DejaVu Sans',sans-serif;font-size:15.5px;">⌥↖</span></div>
<div class="t" style="left:798.79px;top:522px;font-size:16px;line-height:17px;color:#a1a1a1;letter-spacing:0.593px;">Drop files here to open</div>
<svg class="i" style="left:29.34px;top:961.43px;" width="13" height="13" viewBox="0 0 16 16"><use href="#bTodo"/></svg>
<div class="t" style="left:46.15px;top:963px;font-size:11.4px;line-height:12px;color:#c4c4c4;letter-spacing:-0.566px;">TODO</div>
<svg class="i" style="left:96.6px;top:961.43px;" width="13" height="13" viewBox="0 0 16 16"><use href="#bProblems"/></svg>
<div class="t" style="left:114.39px;top:963px;font-size:11.4px;line-height:12px;color:#c4c4c4;letter-spacing:-0.093px;">Problems</div>
<svg class="i" style="left:182.52px;top:961.43px;" width="13" height="13" viewBox="0 0 16 16"><use href="#bTerminal"/></svg>
<div class="t" style="left:200.8px;top:963px;font-size:11.4px;line-height:12px;color:#c4c4c4;letter-spacing:-0.103px;">Terminal</div>
<svg class="i" style="left:261.81px;top:961.43px;" width="13" height="13" viewBox="0 0 16 16"><use href="#bBuild"/></svg>
<div class="t" style="left:279.85px;top:963px;font-size:11.4px;line-height:12px;color:#c4c4c4;letter-spacing:-0.061px;">Build</div>
<svg class="i" style="left:322.2px;top:961.43px;" width="13" height="13" viewBox="0 0 16 16"><use href="#bLogcat"/></svg>
<div class="t" style="left:341.22px;top:963px;font-size:11.4px;line-height:12px;color:#c4c4c4;letter-spacing:0.028px;">Logcat</div>
<svg class="i" style="left:396.82px;top:961.43px;" width="13" height="13" viewBox="0 0 16 16"><use href="#bProfiler"/></svg>
<div class="t" style="left:414.37px;top:963px;font-size:11.4px;line-height:12px;color:#c4c4c4;letter-spacing:0.03px;">Profiler</div>
<svg class="i" style="left:470.96px;top:961.43px;" width="13" height="13" viewBox="0 0 16 16"><use href="#bAppInsp"/></svg>
<div class="t" style="left:489.0px;top:963px;font-size:11.4px;line-height:12px;color:#c4c4c4;letter-spacing:0.018px;">App Inspection</div>
<svg class="i" style="left:1566.53px;top:961.43px;" width="13" height="13" viewBox="0 0 16 16"><use href="#bEvent"/></svg>
<div class="t" style="left:1583.1px;top:963px;font-size:11.4px;line-height:12px;color:#c4c4c4;letter-spacing:-0.026px;">Event Log</div>
<svg class="i" style="left:1655.4px;top:961.43px;" width="13" height="13" viewBox="0 0 16 16"><use href="#bLayout"/></svg>
<div class="t" style="left:1674.42px;top:963px;font-size:11.4px;line-height:12px;color:#c4c4c4;letter-spacing:-0.047px;">Layout Inspector</div>
<svg class="i" style="left:3.56px;top:981.79px;" width="14" height="14" viewBox="0 0 16 16"><use href="#statusBox"/></svg>
<div class="t" style="left:30.19px;top:985px;font-size:11.4px;line-height:12px;color:#cccccc;letter-spacing:0.041px;">* daemon started successfully (today 3:59 PM)</div>
<svg class="i" style="left:1743.01px;top:981.17px;" width="15" height="15" viewBox="0 0 16 16"><use href="#face"/></svg>
<svg class="i" style="left:1766.83px;top:981.17px;" width="15" height="15" viewBox="0 0 16 16"><use href="#face"/></svg>
<svg class="i" style="left:0;top:0" width="1792" height="999" viewBox="0 0 730 407"><path d="M0 407V405.300A1.700 1.700 0 0 0 1.700 407Z" fill="#2a070d"/><path d="M730 407V405.300A1.700 1.700 0 0 1 728.300 407Z" fill="#2a070d"/></svg>
</div>
</body></html>
